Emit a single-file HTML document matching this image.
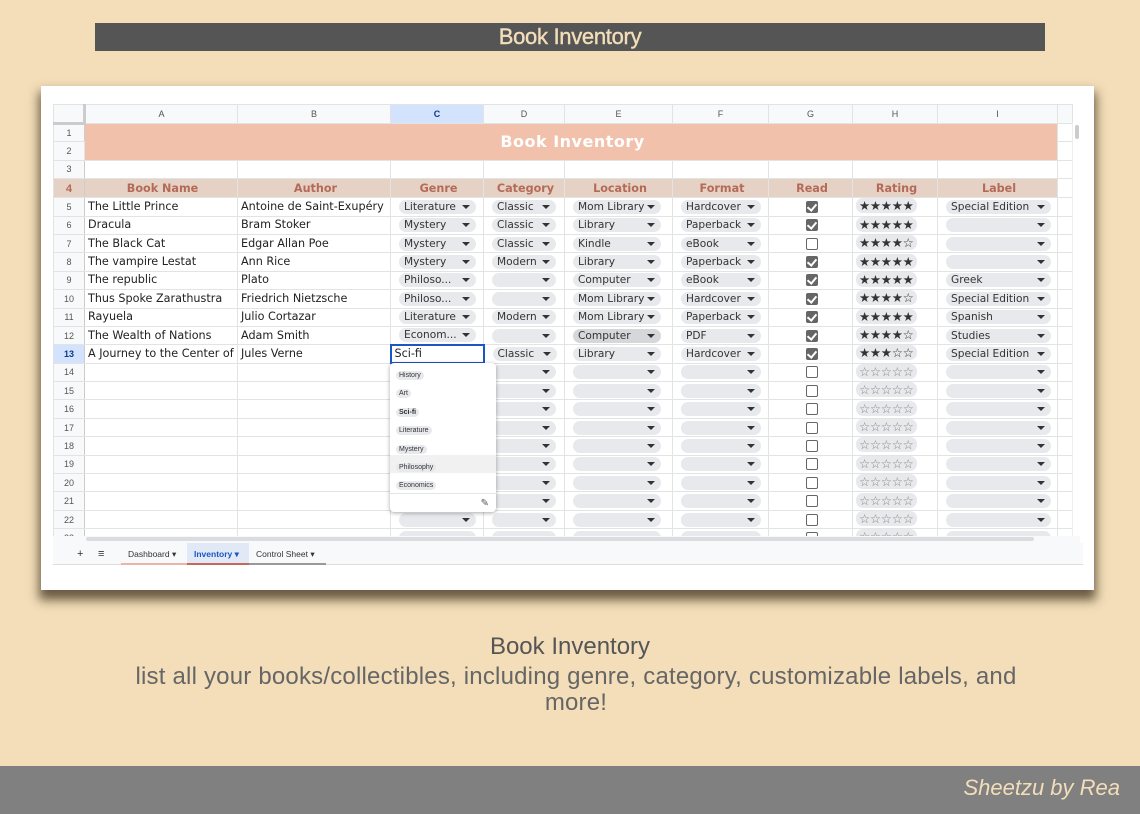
<!DOCTYPE html>
<html><head><meta charset="utf-8"><style>
*{box-sizing:border-box;margin:0;padding:0}
body{width:1140px;height:814px;background:#f3deb9;position:relative;overflow:hidden;font-family:"DejaVu Sans","Liberation Sans",sans-serif}
.top{position:absolute;left:95px;top:23px;width:950px;height:28px;background:#555;color:#f3deb9;font:22px/28px "Liberation Sans",sans-serif;text-align:center;letter-spacing:-0.3px;-webkit-text-stroke:0.4px #f3deb9}
.card{position:absolute;left:41px;top:86px;width:1053px;height:504px;background:#fff;box-shadow:0 8px 10px 2px rgba(60,45,25,.75)}
.grid{position:absolute;left:53px;top:104px;width:1027px;height:432px;overflow:hidden}
table{border-collapse:collapse;table-layout:fixed}
td{height:18.4px;border:1px solid #e2e3e3;font-size:11.2px;color:#222;white-space:nowrap;overflow:hidden;padding:0 0 0 3px;vertical-align:middle;line-height:16px}
td.rh{background:#f8f9fa;color:#555;font:9px "Liberation Sans",sans-serif;text-align:center;padding:0;border-right:1px solid #ccc}
tr.ch td{height:19px;background:#f8f9fa;color:#555;font:9px "Liberation Sans",sans-serif;text-align:center;padding:0}
tr.ch td.sel{background:#d3e3fd;color:#0b3a8a;font-weight:bold}
tr.hd td{background:#e6d1c5;color:#b46a58;font-weight:bold;text-align:center;font-size:11.2px;padding-top:2px}
.c{display:inline-block;position:relative;height:14px;border-radius:7px;background:#e8e9ec;line-height:14px;padding-left:5px;margin-left:5px;vertical-align:middle;color:#333;font-size:10.6px;overflow:hidden}
.c:after{content:"";position:absolute;right:6px;top:5px;border-left:4px solid transparent;border-right:4px solid transparent;border-top:4px solid #333}
.s{display:inline-block;height:15px;border-radius:7px;background:#e8e9ec;line-height:15px;padding:0 3px;font-size:12.5px;color:#333;letter-spacing:-0.3px;font-family:"DejaVu Sans",sans-serif}
.s.e{color:#888}
.cb{display:block;margin:0 auto;width:12px;height:12px;border-radius:2px;background:#666;position:relative}
.cb:after{content:"";position:absolute;left:3px;top:1px;width:4px;height:7px;border:solid #fff;border-width:0 2px 2px 0;transform:rotate(40deg)}
.ub{display:block;margin:0 auto;width:12px;height:12px;border-radius:2px;border:1.5px solid #666}
.dd{position:absolute;left:390px;top:363px;width:106px;height:149px;background:#fff;border-radius:4px;box-shadow:0 1px 4px rgba(0,0,0,.35)}
.dd div{height:18.4px;padding-left:6px;line-height:18.4px}
.dd span{background:#e8e9ec;border-radius:5px;font:7px "Liberation Sans",sans-serif;padding:1px 3px;color:#333}
.tabs{position:absolute;left:53px;top:543px;width:1030px;height:22px;background:#f8f9fa;border-bottom:1px solid #ddd;font:8.5px/22px "Liberation Sans",sans-serif;color:#333}
.tabs span{position:absolute;top:0;height:22px}
.h1{position:absolute;top:633px;width:1140px;text-align:center;font:24px "Liberation Sans",sans-serif;color:#555}
.h2{position:absolute;top:664px;left:6px;width:1140px;text-align:center;font:24px/26px "Liberation Sans",sans-serif;color:#666;letter-spacing:0.2px}
.bot{position:absolute;left:0;top:766px;width:1140px;height:48px;background:#808080}
.bot span{position:absolute;right:20px;top:9px;font:italic 22px "Liberation Sans",sans-serif;color:#f3deb9}
</style></head><body>
<div class="top">Book Inventory</div>
<div class="card"></div>
<div class="grid"><table>
<colgroup><col style="width:31px"><col style="width:153px"><col style="width:153px"><col style="width:93px"><col style="width:81px"><col style="width:108px"><col style="width:96px"><col style="width:84px"><col style="width:85px"><col style="width:120px"><col style="width:15px"></colgroup>
<tr class="ch"><td style="border-right:3px solid #ccc;border-bottom:3px solid #ccc"></td><td>A</td><td>B</td><td class="sel">C</td><td>D</td><td>E</td><td>F</td><td>G</td><td>H</td><td>I</td><td></td></tr>
<tr><td class="rh">1</td><td colspan="9" rowspan="2" style="background:#f2c1ab;color:#fff;font-weight:bold;font-size:16px;text-align:center;letter-spacing:0.5px">Book Inventory</td><td></td></tr>
<tr><td class="rh">2</td><td></td></tr>
<tr><td class="rh">3</td><td></td><td></td><td></td><td></td><td></td><td></td><td></td><td></td><td></td><td></td></tr>
<tr class="hd"><td class="rh">4</td><td>Book Name</td><td>Author</td><td>Genre</td><td>Category</td><td>Location</td><td>Format</td><td>Read</td><td>Rating</td><td>Label</td><td style="background:#fff"></td></tr>
<tr><td class="rh">5</td><td>The Little Prince</td><td>Antoine de Saint-Exupéry</td><td><span class="c" style="width:77px">Literature</span></td><td><span class="c" style="width:64px">Classic</span></td><td><span class="c" style="width:88px">Mom Library</span></td><td><span class="c" style="width:80px">Hardcover</span></td><td><i class="cb"></i></td><td><span class="s">★★★★★</span></td><td><span class="c" style="width:105px">Special Edition</span></td><td></td></tr>
<tr><td class="rh">6</td><td>Dracula</td><td>Bram Stoker</td><td><span class="c" style="width:77px">Mystery</span></td><td><span class="c" style="width:64px">Classic</span></td><td><span class="c" style="width:88px">Library</span></td><td><span class="c" style="width:80px">Paperback</span></td><td><i class="cb"></i></td><td><span class="s">★★★★★</span></td><td><span class="c" style="width:105px"></span></td><td></td></tr>
<tr><td class="rh">7</td><td>The Black Cat</td><td>Edgar Allan Poe</td><td><span class="c" style="width:77px">Mystery</span></td><td><span class="c" style="width:64px">Classic</span></td><td><span class="c" style="width:88px">Kindle</span></td><td><span class="c" style="width:80px">eBook</span></td><td><i class="ub"></i></td><td><span class="s">★★★★☆</span></td><td><span class="c" style="width:105px"></span></td><td></td></tr>
<tr><td class="rh">8</td><td>The vampire Lestat</td><td>Ann Rice</td><td><span class="c" style="width:77px">Mystery</span></td><td><span class="c" style="width:64px">Modern</span></td><td><span class="c" style="width:88px">Library</span></td><td><span class="c" style="width:80px">Paperback</span></td><td><i class="cb"></i></td><td><span class="s">★★★★★</span></td><td><span class="c" style="width:105px"></span></td><td></td></tr>
<tr><td class="rh">9</td><td>The republic</td><td>Plato</td><td><span class="c" style="width:77px">Philoso...</span></td><td><span class="c" style="width:64px"></span></td><td><span class="c" style="width:88px">Computer</span></td><td><span class="c" style="width:80px">eBook</span></td><td><i class="cb"></i></td><td><span class="s">★★★★★</span></td><td><span class="c" style="width:105px">Greek</span></td><td></td></tr>
<tr><td class="rh">10</td><td>Thus Spoke Zarathustra</td><td>Friedrich Nietzsche</td><td><span class="c" style="width:77px">Philoso...</span></td><td><span class="c" style="width:64px"></span></td><td><span class="c" style="width:88px">Mom Library</span></td><td><span class="c" style="width:80px">Hardcover</span></td><td><i class="cb"></i></td><td><span class="s">★★★★☆</span></td><td><span class="c" style="width:105px">Special Edition</span></td><td></td></tr>
<tr><td class="rh">11</td><td>Rayuela</td><td>Julio Cortazar</td><td><span class="c" style="width:77px">Literature</span></td><td><span class="c" style="width:64px">Modern</span></td><td><span class="c" style="width:88px">Mom Library</span></td><td><span class="c" style="width:80px">Paperback</span></td><td><i class="cb"></i></td><td><span class="s">★★★★★</span></td><td><span class="c" style="width:105px">Spanish</span></td><td></td></tr>
<tr><td class="rh">12</td><td>The Wealth of Nations</td><td>Adam Smith</td><td><span class="c" style="width:77px">Econom...</span></td><td><span class="c" style="width:64px"></span></td><td><span class="c" style="width:88px;background:#d6d7da">Computer</span></td><td><span class="c" style="width:80px">PDF</span></td><td><i class="cb"></i></td><td><span class="s">★★★★☆</span></td><td><span class="c" style="width:105px">Studies</span></td><td></td></tr>
<tr><td class="rh" style="background:#d3e3fd;color:#0b3a8a;font-weight:bold">13</td><td>A Journey to the Center of</td><td>Jules Verne</td><td style="border:2px solid #1a56c4">Sci-fi</td><td><span class="c" style="width:64px">Classic</span></td><td><span class="c" style="width:88px">Library</span></td><td><span class="c" style="width:80px">Hardcover</span></td><td><i class="cb"></i></td><td><span class="s">★★★☆☆</span></td><td><span class="c" style="width:105px">Special Edition</span></td><td></td></tr>
<tr><td class="rh">14</td><td></td><td></td><td><span class="c" style="width:77px"></span></td><td><span class="c" style="width:64px"></span></td><td><span class="c" style="width:88px"></span></td><td><span class="c" style="width:80px"></span></td><td><i class="ub"></i></td><td><span class="s e">☆☆☆☆☆</span></td><td><span class="c" style="width:105px"></span></td><td></td></tr>
<tr><td class="rh">15</td><td></td><td></td><td><span class="c" style="width:77px"></span></td><td><span class="c" style="width:64px"></span></td><td><span class="c" style="width:88px"></span></td><td><span class="c" style="width:80px"></span></td><td><i class="ub"></i></td><td><span class="s e">☆☆☆☆☆</span></td><td><span class="c" style="width:105px"></span></td><td></td></tr>
<tr><td class="rh">16</td><td></td><td></td><td><span class="c" style="width:77px"></span></td><td><span class="c" style="width:64px"></span></td><td><span class="c" style="width:88px"></span></td><td><span class="c" style="width:80px"></span></td><td><i class="ub"></i></td><td><span class="s e">☆☆☆☆☆</span></td><td><span class="c" style="width:105px"></span></td><td></td></tr>
<tr><td class="rh">17</td><td></td><td></td><td><span class="c" style="width:77px"></span></td><td><span class="c" style="width:64px"></span></td><td><span class="c" style="width:88px"></span></td><td><span class="c" style="width:80px"></span></td><td><i class="ub"></i></td><td><span class="s e">☆☆☆☆☆</span></td><td><span class="c" style="width:105px"></span></td><td></td></tr>
<tr><td class="rh">18</td><td></td><td></td><td><span class="c" style="width:77px"></span></td><td><span class="c" style="width:64px"></span></td><td><span class="c" style="width:88px"></span></td><td><span class="c" style="width:80px"></span></td><td><i class="ub"></i></td><td><span class="s e">☆☆☆☆☆</span></td><td><span class="c" style="width:105px"></span></td><td></td></tr>
<tr><td class="rh">19</td><td></td><td></td><td><span class="c" style="width:77px"></span></td><td><span class="c" style="width:64px"></span></td><td><span class="c" style="width:88px"></span></td><td><span class="c" style="width:80px"></span></td><td><i class="ub"></i></td><td><span class="s e">☆☆☆☆☆</span></td><td><span class="c" style="width:105px"></span></td><td></td></tr>
<tr><td class="rh">20</td><td></td><td></td><td><span class="c" style="width:77px"></span></td><td><span class="c" style="width:64px"></span></td><td><span class="c" style="width:88px"></span></td><td><span class="c" style="width:80px"></span></td><td><i class="ub"></i></td><td><span class="s e">☆☆☆☆☆</span></td><td><span class="c" style="width:105px"></span></td><td></td></tr>
<tr><td class="rh">21</td><td></td><td></td><td><span class="c" style="width:77px"></span></td><td><span class="c" style="width:64px"></span></td><td><span class="c" style="width:88px"></span></td><td><span class="c" style="width:80px"></span></td><td><i class="ub"></i></td><td><span class="s e">☆☆☆☆☆</span></td><td><span class="c" style="width:105px"></span></td><td></td></tr>
<tr><td class="rh">22</td><td></td><td></td><td><span class="c" style="width:77px"></span></td><td><span class="c" style="width:64px"></span></td><td><span class="c" style="width:88px"></span></td><td><span class="c" style="width:80px"></span></td><td><i class="ub"></i></td><td><span class="s e">☆☆☆☆☆</span></td><td><span class="c" style="width:105px"></span></td><td></td></tr>
<tr><td class="rh">23</td><td></td><td></td><td><span class="c" style="width:77px"></span></td><td><span class="c" style="width:64px"></span></td><td><span class="c" style="width:88px"></span></td><td><span class="c" style="width:80px"></span></td><td><i class="ub"></i></td><td><span class="s e">☆☆☆☆☆</span></td><td><span class="c" style="width:105px"></span></td><td></td></tr>
</table>
<div style="position:absolute;left:1019px;top:19px;width:8px;height:420px;background:#fff;border-left:1px solid #eee"><div style="margin:2px 0 0 2px;width:4px;height:14px;background:#ccc;border-radius:2px"></div></div>
</div>
<div style="position:absolute;left:53px;top:536px;width:1027px;height:7px;background:#f8f9fa"><div style="position:absolute;left:33px;top:1px;width:948px;height:4px;background:#dadce0;border-radius:2px"></div></div>
<div class="dd">
<div><span>History</span></div><div><span>Art</span></div><div><span style="font-weight:bold">Sci-fi</span></div><div><span>Literature</span></div><div><span>Mystery</span></div><div style="background:#f1f1f1"><span>Philosophy</span></div><div><span>Economics</span></div>
<div style="border-top:1px solid #e5e5e5;margin-top:1px;height:20px;text-align:right;padding-right:7px;font-size:10px;color:#555;line-height:20px">✎</div>
</div>
<div class="tabs">
<span style="left:24px;font-size:11px">+</span><span style="left:45px;font-size:11px">≡</span>
<span style="left:68px;width:66px;padding-left:7px;border-bottom:2px solid #e9b6a6">Dashboard ▾</span>
<span style="left:134px;width:62px;padding-left:7px;background:#e1e9f7;color:#1a56c4;font-weight:bold;border-bottom:2px solid #c46a5a">Inventory ▾</span>
<span style="left:196px;width:77px;padding-left:7px;border-bottom:2px solid #999">Control Sheet ▾</span>
</div>
<div class="h1">Book Inventory</div>
<div class="h2">list all your books/collectibles, including genre, category, customizable labels, and<br>more!</div>
<div class="bot"><span>Sheetzu by Rea</span></div>
</body></html>
